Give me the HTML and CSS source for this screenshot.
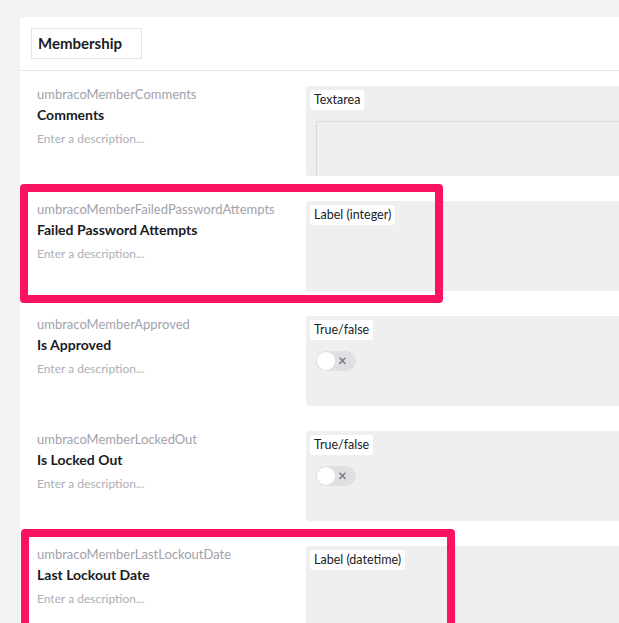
FILE: index.html
```html
<!DOCTYPE html>
<html>
<head lang="en">
    <meta charset="UTF-8">
    <title>Member type - Membership</title>
    <link rel="stylesheet" href="styles.css">
</head>
<body>
<div class="page">
    <div class="panel">
        <!-- tab header -->
        <div class="panel-head">
            <div class="tab-name">Membership</div>
        </div>

        <div class="prop">
            <div class="prop-label">
                <div class="alias">umbracoMemberComments</div>
                <div class="name">Comments</div>
                <div class="desc">Enter a description...</div>
            </div>
            <div class="editor">
                <span class="chip">Textarea</span>
                <div class="textarea"></div>
            </div>
        </div>

        <div class="prop">
            <div class="prop-label">
                <div class="alias">umbracoMemberFailedPasswordAttempts</div>
                <div class="name">Failed Password Attempts</div>
                <div class="desc">Enter a description...</div>
            </div>
            <div class="editor">
                <span class="chip">Label (integer)</span>
            </div>
            <div class="mark"></div><!-- highlight frame -->
        </div>

        <div class="prop">
            <div class="prop-label">
                <div class="alias">umbracoMemberApproved</div>
                <div class="name">Is Approved</div>
                <div class="desc">Enter a description...</div>
            </div>
            <div class="editor">
                <span class="chip">True/false</span>
                <div class="toggle"><span class="knob"></span><span class="cross">&#215;</span></div>
            </div>
        </div>

        <div class="prop">
            <div class="prop-label">
                <div class="alias">umbracoMemberLockedOut</div>
                <div class="name">Is Locked Out</div>
                <div class="desc">Enter a description...</div>
            </div>
            <div class="editor">
                <span class="chip">True/false</span>
                <div class="toggle"><span class="knob"></span><span class="cross">&#215;</span></div>
            </div>
        </div>

        <div class="prop">
            <div class="prop-label">
                <div class="alias">umbracoMemberLastLockoutDate</div>
                <div class="name">Last Lockout Date</div>
                <div class="desc">Enter a description...</div>
            </div>
            <div class="editor">
                <span class="chip">Label (datetime)</span>
            </div>
            <div class="mark mark-wide"></div>
        </div>
    </div>
</div>
</body>
</html>
```

FILE: styles.css
```css
*{ margin:0; padding:0; box-sizing:border-box; }
html,body{ height:100%; overflow:hidden; }
body{ background:#f3f3f5; font-family:Lato,"Noto Sans",sans-serif; color:#1b1b1f; }

.page{ padding:17px 0 0 20px; }
.panel{ width:720px; background:#fff; border-radius:3px 3px 0 0; }

.panel-head{ padding:11px; border-bottom:1px solid #e9e9eb; }
.tab-name{ width:111px; height:31px; border:1px solid #e3e3e5; padding:0 6px; font-size:15px; font-weight:700; line-height:29px; }

/* one property row */
.prop{ display:flex; height:115px; padding-top:15px; position:relative; }
.prop-label{ width:286px; padding:0 0 0 17px; margin-top:-1px; }
.alias{ font-size:13px; line-height:18px; color:#a2a2ab; }
.name{ font-size:14px; font-weight:700; line-height:20px; margin-top:2px; }
.desc{ font-size:12px; line-height:18px; color:#aeaeb4; margin-top:5px; }

.editor{ flex:1; height:90px; background:#efefef; border-radius:3px; padding:4px; overflow:hidden; }
.chip{ display:inline-block; height:20px; padding:0 4px; background:#fff; border-radius:3px; font-size:12.5px; line-height:19px; color:#1b1b1f; vertical-align:top; }

.textarea{ height:80px; margin:11px 0 0 6px; border:1px solid #dadada; border-right:0; }

.toggle{ width:40px; height:20px; margin:11px 0 0 6px; border-radius:10px; background:#e0e0e2; position:relative; }
.knob{ position:absolute; left:1px; top:1px; width:18px; height:18px; border-radius:50%; background:#fff; }
.cross{ position:absolute; left:22px; top:0; font-size:15px; line-height:19px; font-weight:700; color:#7b7b8c; }

/* pink frame drawn over a row */
.mark{ position:absolute; left:0; top:-2px; width:423px; height:119px; border:8px solid #fb1361; border-radius:4px; }
.mark-wide{ left:1px; width:434px; }
```
